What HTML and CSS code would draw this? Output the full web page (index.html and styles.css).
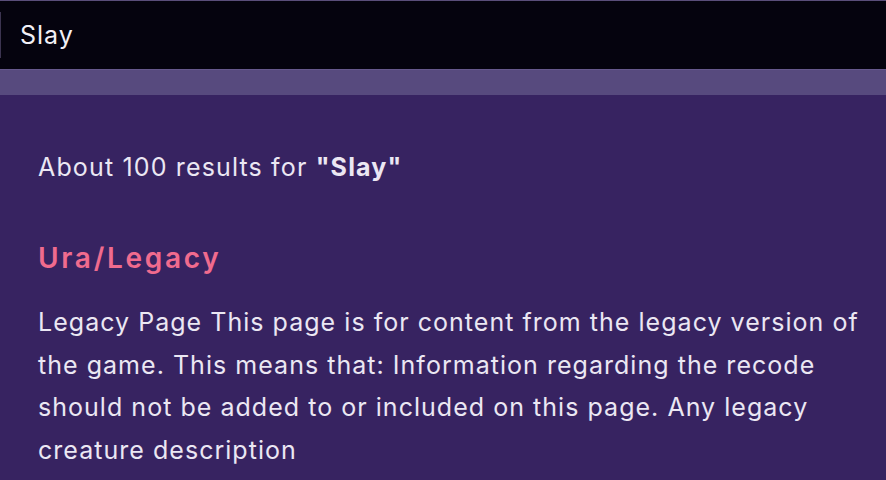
FILE: index.html
```html
<!DOCTYPE html>
<html>
<head>
<meta charset="utf-8">
<link rel="stylesheet" href="styles.css">
</head>
<body>
<div class="searchbar">
  <div class="field"><span class="query">Slay</span></div>
</div>
<div class="band"></div>
<main class="results">
  <p class="summary">About 100 results for <strong>"Slay"</strong></p>
  <h2 class="title">Ura/Legacy</h2>
  <p class="snippet">Legacy Page This page is for content from the legacy version of the game. This means that: Information regarding the recode should not be added to or included on this page. Any legacy creature description</p>
</main>
</body>
</html>
```
FILE: styles.css
```css
html, body {
  margin: 0;
  padding: 0;
  background: #372361;
  font-family: "Inter", "Noto Sans", sans-serif;
  color: #ebe7f3;
}
.searchbar {
  background: #05030e;
  border-top: 1px solid #5a4e7a;
  height: 68px;
  display: flex;
  align-items: center;
}
.field {
  border-left: 1px solid #3c3450;
  height: 46px;
  display: flex;
  align-items: center;
  padding-left: 19px;
}
.query {
  font-size: 25px;
  letter-spacing: 1px;
  color: #f2f0f6;
}
.band {
  height: 25px;
  background: #574a7e;
  border-top: 1px solid #66588c;
}
.results {
  padding: 0 20px 0 38px;
  overflow: hidden;
}
.summary {
  margin: 56px 0 0;
  font-size: 25px;
  line-height: 32px;
  letter-spacing: 1.15px;
}
.summary strong {
  font-weight: 700;
}
.title {
  margin: 58px 0 0;
  font-size: 28px;
  line-height: 34px;
  font-weight: 600;
  letter-spacing: 2.7px;
  color: #f06b8e;
}
.snippet {
  margin: 26px 0 0;
  font-size: 25px;
  line-height: 42.5px;
  letter-spacing: 1.03px;
}
```
